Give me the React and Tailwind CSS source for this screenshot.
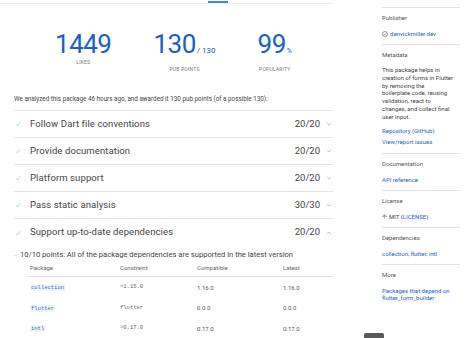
import React from 'react';

const Check = ({ size = 6, className = '' }) => (
    <svg width={size} height={size} viewBox="0 0 10 10" className={className}>
        <polyline points="1.5,5.5 4,8 8.5,2.5" fill="none" stroke="currentColor" strokeWidth="1.2" />
    </svg>
);

const Chevron = ({ up = false }) => (
    <svg width="6" height="4" viewBox="0 0 6 4" className="text-[#b5b5b5]">
        <polyline points={up ? '1,3 3,1 5,3' : '1,1 3,3 5,1'} fill="none" stroke="currentColor" strokeWidth="0.8" />
    </svg>
);

const ScoreRow = ({ title, score, open, border = true }) => (
    <div className={`flex items-center h-[27px] ${border ? 'border-b border-[#e6e6e6]' : ''}`}>
        <Check size={6} className="ml-[1px] text-[#8cc4a0]" />
        <span className="ml-[9px] text-[9.5px] tracking-[0.1px] text-[#444]">{title}</span>
        <span className="ml-auto text-[9.5px] text-[#444]">{score}</span>
        <span className="ml-[6px] mr-[1px] flex items-center"><Chevron up={open} /></span>
    </div>
);

const Stat = ({ value, suffix, suffixClass, label }) => (
    <div className="flex flex-col items-center px-[21px]">
        <div className="flex items-baseline text-[#1a5fc4] leading-[26px]">
            <span className="text-[26px] tracking-[-0.5px]">{value}</span>
            {suffix && <span className={suffixClass}>{suffix}</span>}
        </div>
        <span className="mt-[2px] text-[5px] leading-[7px] tracking-[0.2px] text-[#777]">{label}</span>
    </div>
);

const deps = [
    { name: 'collection', constraint: '^1.15.0', compatible: '1.16.0', latest: '1.16.0' },
    { name: 'flutter', constraint: 'flutter', compatible: '0.0.0', latest: '0.0.0' },
    { name: 'intl', constraint: '^0.17.0', compatible: '0.17.0', latest: '0.17.0' },
];

const SideSection = ({ heading, children, last }) => (
    <div className={`border-t border-[#e3e3e3] pt-[6px] ${last ? '' : 'pb-[6px]'}`}>
        <div className="text-[6px] leading-[8px] text-[#555]">{heading}</div>
        <div className="mt-[8px]">{children}</div>
    </div>
);

export default function App() {
    return (
        <div className="relative flex w-[474px] h-[338px] overflow-hidden bg-white" style={{ fontFamily: 'Roboto, "Noto Sans", sans-serif' }}>
            <div className="w-[333px] shrink-0">
                <div className="h-[3px] border-b border-[#ebebeb]">
                    <div className="ml-[208px] w-[20px] h-[2px] mt-[1px] bg-[#4a86d6]" />
                </div>

                <div className="pl-[14px]">
                    <div className="flex justify-center mt-[27px]">
                        <Stat value="1449" label="LIKES" />
                        <Stat value="130" suffix="/ 130" suffixClass="ml-[1px] text-[8px]" label="PUB POINTS" />
                        <Stat value="99" suffix="%" suffixClass="ml-[1px] text-[7px]" label="POPULARITY" />
                    </div>

                    <p className="mt-[22px] text-[6.3px] leading-[8px] text-[#444]">
                        We analyzed this package 46 hours ago, and awarded it 130 pub points (of a possible 130):
                    </p>

                    <div className="mt-[7px] border-t border-[#e6e6e6]">
                        <ScoreRow title="Follow Dart file conventions" score="20/20" />
                        <ScoreRow title="Provide documentation" score="20/20" />
                        <ScoreRow title="Platform support" score="20/20" />
                        <ScoreRow title="Pass static analysis" score="30/30" />
                        <ScoreRow title="Support up-to-date dependencies" score="20/20" open border={false} />

                        <div className="flex items-center mt-[5px] h-[8px]">
                            <Check size={4} className="text-[#8cc4a0]" />
                            <span className="ml-[2px] text-[7.6px] text-[#444]">10/10 points: All of the package dependencies are supported in the latest version</span>
                        </div>

                        <div className="ml-[13px]">
                            <div className="grid grid-cols-[90px_77px_86px_1fr] h-[18px] items-center pl-[3px] border-b border-[#e3e3e3] text-[6px] text-[#666]">
                                <span>Package</span>
                                <span>Constraint</span>
                                <span>Compatible</span>
                                <span>Latest</span>
                            </div>
                            {deps.map(d => (
                                <div key={d.name} className="grid grid-cols-[90px_77px_86px_1fr] h-[20.5px] items-center pl-[3px] text-[6px] text-[#555]">
                                    <span>
                                        <span className="bg-[#f2f4f7] px-[1px] text-[5.5px] text-[#2f6fc0]" style={{ fontFamily: '"Liberation Mono", monospace' }}>{d.name}</span>
                                    </span>
                                    <span className="text-[5.5px] text-[#666]" style={{ fontFamily: '"Liberation Mono", monospace' }}>{d.constraint}</span>
                                    <span>{d.compatible}</span>
                                    <span>{d.latest}</span>
                                </div>
                            ))}
                        </div>
                    </div>
                </div>
            </div>

            <div className="ml-[49px] w-[78px] mt-[7px] shrink-0 text-[6px] leading-[8px]">
                <SideSection heading="Publisher">
                    <div className="flex items-center gap-[2px] text-[#1b63c6]">
                        <svg width="6" height="6" viewBox="0 0 12 12" className="text-[#555]">
                            <circle cx="6" cy="6" r="5" fill="none" stroke="currentColor" strokeWidth="1.2" />
                            <polyline points="3.5,6 5.3,7.8 8.5,4.5" fill="none" stroke="currentColor" strokeWidth="1.2" />
                        </svg>
                        <span>danvickmiller.dev</span>
                    </div>
                </SideSection>
                <div className="border-t border-[#e3e3e3] pt-[6px] pb-[7px]">
                    <div className="text-[#555]">Metadata</div>
                    <p className="mt-[7px] leading-[7.8px] text-[#444] whitespace-nowrap">
                        This package helps in<br />
                        creation of forms in Flutter<br />
                        by removing the<br />
                        boilerplate code, reusing<br />
                        validation, react to<br />
                        changes, and collect final<br />
                        user input.
                    </p>
                    <div className="mt-[6px] text-[#1b63c6]">Repository (GitHub)</div>
                    <div className="mt-[3px] text-[#1b63c6]">View/report issues</div>
                </div>
                <SideSection heading="Documentation">
                    <div className="text-[#1b63c6]">API reference</div>
                </SideSection>
                <SideSection heading="License">
                    <div className="flex items-center gap-[2px]">
                        <svg width="5" height="5" viewBox="0 0 10 10" className="text-[#666]">
                            <line x1="5" y1="1" x2="5" y2="9" stroke="currentColor" strokeWidth="1" />
                            <line x1="1.5" y1="2.5" x2="8.5" y2="2.5" stroke="currentColor" strokeWidth="1" />
                            <path d="M0.5 6 L2 3 L3.5 6 Z M6.5 6 L8 3 L9.5 6 Z" fill="currentColor" />
                        </svg>
                        <span className="text-[#444]">MIT (<span className="text-[#1b63c6]">LICENSE</span>)</span>
                    </div>
                </SideSection>
                <SideSection heading="Dependencies">
                    <div className="text-[#1b63c6]">collection, flutter, intl</div>
                </SideSection>
                <SideSection heading="More" last>
                    <div className="text-[#1b63c6] leading-[7.5px] whitespace-nowrap">
                        Packages that depend on<br />flutter_form_builder
                    </div>
                </SideSection>
            </div>

            <div className="absolute left-[364px] top-[333px] w-[20px] h-[8px] rounded-[2px] bg-[#5a5a5a]" />
        </div>
    );
}
